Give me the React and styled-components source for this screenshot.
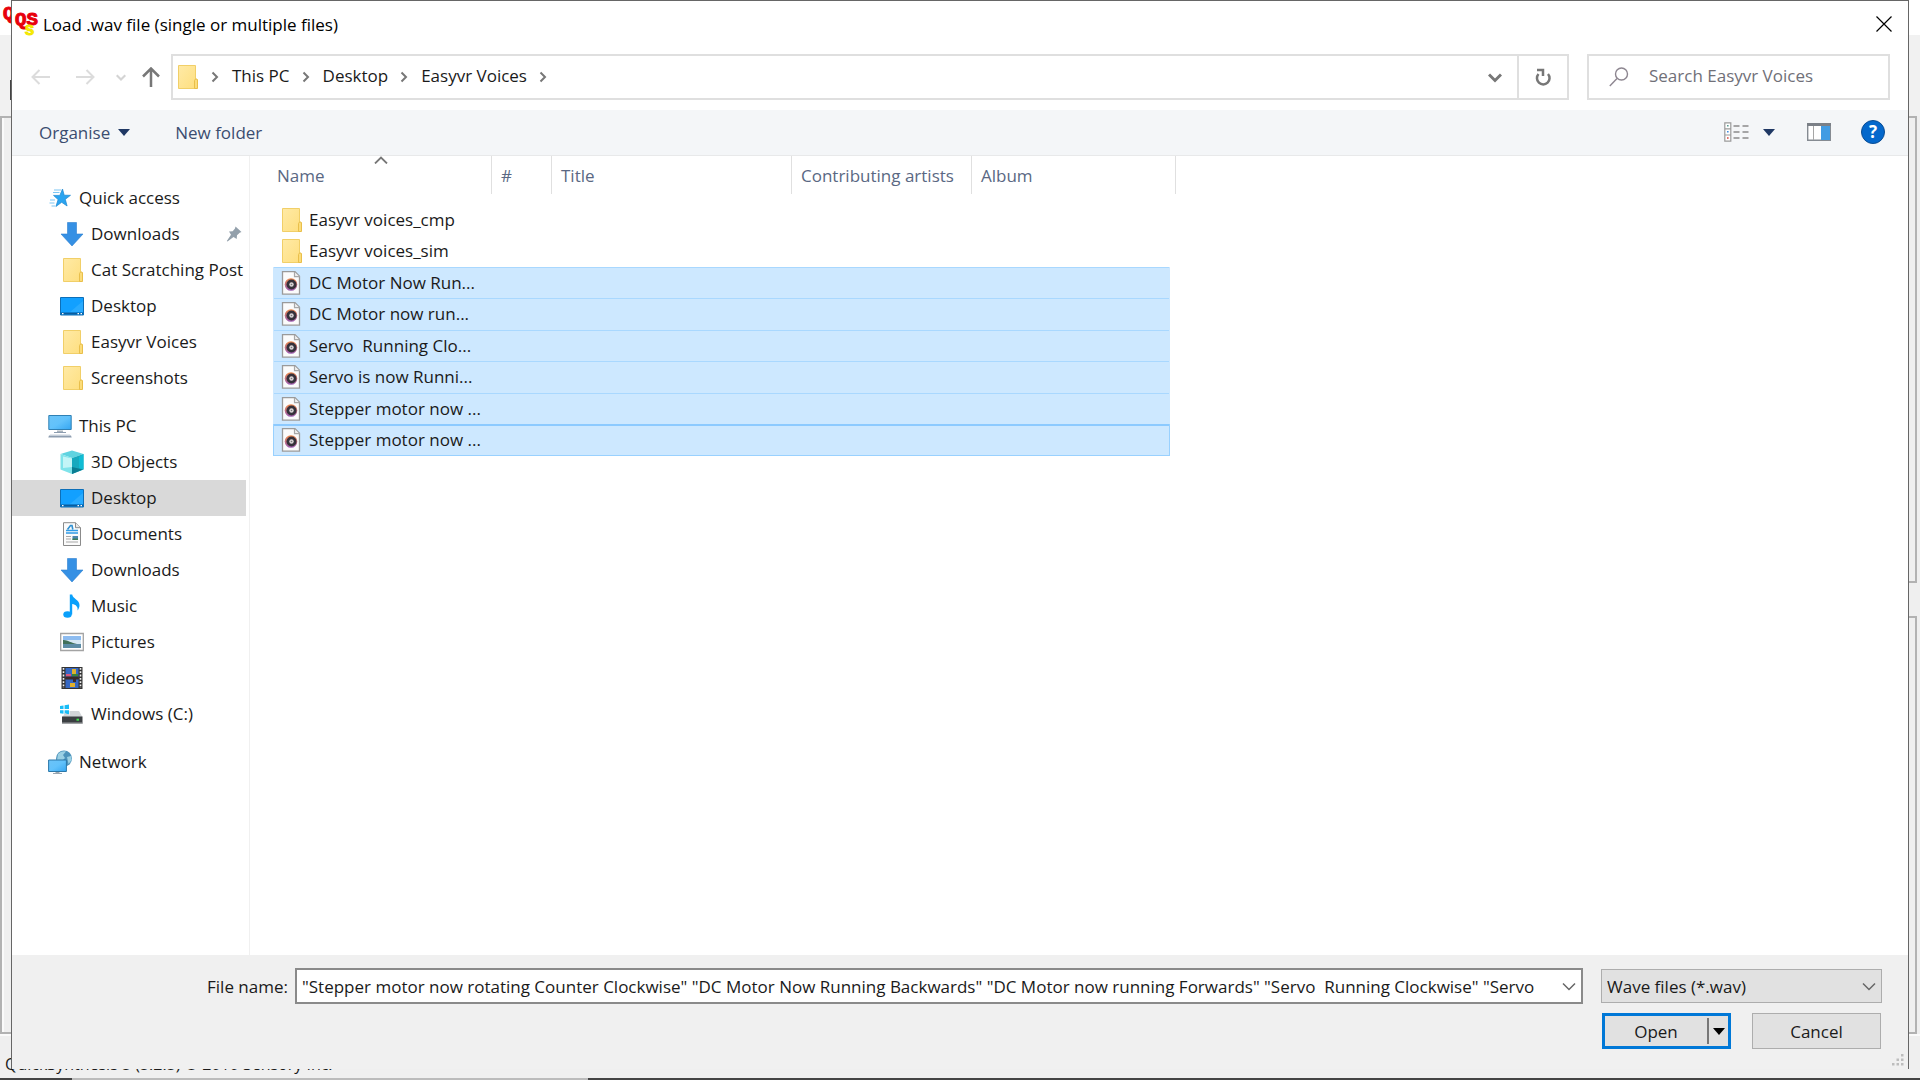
import React from 'react';
import styled, { createGlobalStyle } from 'styled-components';

const quickAccess = [
    { label: 'Downloads', icon: 'download', pinned: true },
    { label: 'Cat Scratching Post', icon: 'folder' },
    { label: 'Desktop', icon: 'desktop' },
    { label: 'Easyvr Voices', icon: 'folder' },
    { label: 'Screenshots', icon: 'folder' },
];

const thisPc = [
    { label: '3D Objects', icon: 'cube' },
    { label: 'Desktop', icon: 'desktop', current: true },
    { label: 'Documents', icon: 'document' },
    { label: 'Downloads', icon: 'download' },
    { label: 'Music', icon: 'music' },
    { label: 'Pictures', icon: 'picture' },
    { label: 'Videos', icon: 'video' },
    { label: 'Windows (C:)', icon: 'drive' },
];

const files = [
    { name: 'Easyvr voices_cmp', icon: 'folder' },
    { name: 'Easyvr voices_sim', icon: 'folder' },
    { name: 'DC Motor Now Run...', icon: 'wave', selected: true },
    { name: 'DC Motor now run...', icon: 'wave', selected: true },
    { name: 'Servo  Running Clo...', icon: 'wave', selected: true },
    { name: 'Servo is now Runni...', icon: 'wave', selected: true },
    { name: 'Stepper motor now ...', icon: 'wave', selected: true },
    { name: 'Stepper motor now ...', icon: 'wave', selected: true, focused: true },
];

const fileNames = '"Stepper motor now rotating Counter Clockwise" "DC Motor Now Running Backwards" "DC Motor now running Forwards" "Servo  Running Clockwise" "Servo';

/* icons, all drawn on a 24px grid */

const shapes = {
    folder: (
        <>
            <path d="M3.5 .5h17v23h-17z" fill="url(#folderFill)" stroke="#f1cf68" />
            <path d="M19.5 23.5v-8l1-1.500h1.500l.5 1v8.500z" fill="#fbdc7a" stroke="#e9bf4b" />
        </>
    ),
    wave: (
        <>
            <path d="M3.500 .7h12.500l4.500 4.500v18h-17z" fill="#fbfbfb" stroke="#9a9a9a" strokeWidth="1.300" />
            <path d="M15.500 1v4.700h5" fill="#eee" stroke="#a8a8a8" strokeWidth="1.200" />
            <circle cx="12" cy="13.500" r="6.300" fill="url(#waveFill)" />
            <circle cx="12.500" cy="13.500" r="5" fill="#35313a" />
            <circle cx="12.500" cy="13.500" r="2.200" fill="#d9d4d6" />
            <circle cx="12.500" cy="13.500" r=".8" fill="#777" />
        </>
    ),
    download: <path d="M7.500 .5h9v11.500h6.500L12 24 1 12h6.500z" fill="#3590e4" stroke="#2b7fd0" strokeWidth=".6" />,
    desktop: (
        <>
            <path d="M.5 3.500h23v17.500H.5z" fill="#12a0ff" stroke="#0d6fb8" />
            <path d="M10 18 23 7v11z" fill="#39b3ff" opacity=".6" />
            <path d="M1 18.500h22v2H1z" fill="#0a5c9d" />
            <path d="M2 19h1.500v1.200H2zM17.500 19H19v1.200h-1.500zM20.500 19H22v1.200h-1.500z" fill="#fff" />
        </>
    ),
    star: (
        <>
            <path d="M14.500 3l1.700 6.200 6.300.1-5.200 4 1.800 6.700-5.400-3.700-5.800 4.200 2.200-6.900-4.600-4.200h6.300z" fill="#2aa4f0" stroke="#1b86d0" strokeWidth=".7" />
            <path d="M6 4h7M5 6.500h6.500M2 14h5M1.500 17h5M3.500 20h3.500" stroke="#7cc6f3" strokeWidth="1.200" />
        </>
    ),
    pc: (
        <>
            <path d="M.8 1.500h22.400v14H.8z" fill="url(#screenFill)" stroke="#2f80b4" />
            <path d="M9 16.500h6v1.500H9z" fill="#aab4bd" />
            <path d="M6 18h12v1H6zM1 21.500h22l.7 2H.3z" fill="#8d9db0" />
            <path d="M2 20.500h20v1H2z" fill="#c7d0da" />
        </>
    ),
    cube: (
        <>
            <path d="M12 .5 23.500 4 12 8 .5 4z" fill="#5fd3e0" />
            <path d="M.5 4 12 8v16L.5 19.500z" fill="#7fe3ea" />
            <path d="M12 8l11.500-4v15.500L12 24z" fill="#16a9be" />
            <path d="M3 6.500l9 2v8.500l-9 1z" fill="#c3f5f7" />
            <path d="M12 17l11 2.500L12 24z" fill="#0a7d92" />
            <path d="M19 7l4.500-3v15.500L19 18z" fill="#10bcd4" />
        </>
    ),
    document: (
        <>
            <path d="M3.500 .7h12l5 5v17.800h-17z" fill="#fbfbfb" stroke="#8b8b8b" />
            <path d="M15.500 .7v5h5" fill="#e8e8e8" stroke="#8b8b8b" />
            <path d="M7.500 7.500 10.500 3.500h1.500l.8 4" fill="none" stroke="#2f8fd0" strokeWidth="1.600" />
            <path d="M6 8.500h12M6 11h12" stroke="#2f9be6" strokeWidth="1.500" />
            <path d="M6 14.500h5M6 17h5M6 20h12" stroke="#a7a7a7" />
            <path d="M12.500 14h5.500v4h-5.500z" fill="#4c86ad" />
            <path d="M12.500 16.500h5.500V18h-5.500z" fill="#3d7d57" />
        </>
    ),
    music: (
        <>
            <ellipse cx="7.500" cy="20.500" rx="4.200" ry="3.200" fill="#0aa0fb" />
            <path d="M9.800 .5h2.400c.5 4.500 7.300 5 7.300 10.500 0 2.300-.8 4.200-2 5.500.7-3.500-1.500-6-5.300-6.500v10.500H9.800z" fill="#0aa0fb" />
        </>
    ),
    picture: (
        <>
            <path d="M.7 3.500h22.600v17H.7z" fill="#fff" stroke="#a3a3a3" strokeWidth="1.300" />
            <path d="M3 6h18v12H3z" fill="#8dbcf0" />
            <path d="M3 10h18v4H3z" fill="#d6e8f4" />
            <path d="M3 10c4-.5 8 3 14 4H3z" fill="#41705a" />
            <path d="M3 14h18v4H3z" fill="#5c8ca5" />
        </>
    ),
    video: (
        <>
            <path d="M1.500 1h21v22h-21z" fill="#333" />
            <path d="M5.500 2h13v9.500h-13zM5.500 13h13v9h-13z" fill="#3668c4" />
            <path d="M12 3h4v5h-4zM10 17h5v4h-5z" fill="#e0b02e" />
            <path d="M6 8h5v2.500H6z" fill="#d8567c" />
            <path d="M12 8h6v2.500h-6z" fill="#37853b" />
            <path d="M5.500 10.500h13v3h-13zM13 13h3v3h-3z" fill="#3a2a2a" />
            <path d="M3.500 2v20M20.500 2v20" stroke="#eee" strokeWidth="1.600" strokeDasharray="1.800 1.500" />
        </>
    ),
    drive: (
        <>
            <path d="M0 4l3.500-.5v3.600H0zM4.600 3.300 9 2.500v4.600H4.600zM0 8.200h3.500v3.500L0 11.200zM4.600 8.200H9v4.400l-4.400-.7z" fill="#19bdf7" />
            <path d="M5 11l-2.500 4h20L19 9H9.500v4z" fill="#d2d5d8" />
            <path d="M2 14.500h20.500v7H2z" fill="#3b3f42" />
            <path d="M2 20.500h20.500v1.500H2z" fill="#a0a3a5" />
            <path d="M16.500 16.700h2.500v2h-2.500z" fill="#3fe04a" />
        </>
    ),
    network: (
        <>
            <circle cx="16" cy="8.500" r="8" fill="#4d93bb" />
            <path d="M10 4c3-3 6-3 8-2.500L15 5l2 3-3 3-5-1zM19 7l4-1 .7 4-3.200 4z" fill="#9ad0e4" />
            <path d="M.6 10h17.800v11.500H.6z" fill="url(#screenFill)" stroke="#2b77a8" />
            <path d="M7.500 22h4v1h-4zM5 23h9v1H5z" fill="#9aa6b0" />
        </>
    ),
};

const Icon = ({ name }) => (
    <IconSvg viewBox="0 0 24 24" aria-hidden="true">{shapes[name]}</IconSvg>
);

const Gradients = () => (
    <HiddenSvg aria-hidden="true">
        <defs>
            <linearGradient id="folderFill" x1="0" y1="0" x2="1" y2="1">
                <stop offset="0" stopColor="#ffeaa6" />
                <stop offset="1" stopColor="#fedf80" />
            </linearGradient>
            <linearGradient id="screenFill" x1="0" y1="0" x2="1" y2="1">
                <stop offset="0" stopColor="#6cc4f8" />
                <stop offset=".5" stopColor="#62c2fb" />
                <stop offset="1" stopColor="#35a6f2" />
            </linearGradient>
            <linearGradient id="waveFill" x1="0" y1="0" x2="0" y2="1">
                <stop offset="0" stopColor="#ee8a4a" />
                <stop offset="1" stopColor="#9a5bb5" />
            </linearGradient>
        </defs>
    </HiddenSvg>
);

const Logo = () => (
    <LogoSvg viewBox="0 0 24 24" aria-hidden="true">
        <text x="0" y="13" fontSize="19" fill="#e8000c" stroke="#e8000c" strokeWidth="1">QS</text>
        <text x="10" y="23" fontSize="15" fill="#fff200" stroke="#efe400" strokeWidth="1">S</text>
    </LogoSvg>
);

const Chevron = ({ size = 14, color = '#777', width = 2 }) => (
    <svg width={size} height={size} viewBox="0 0 14 14" fill="none" stroke={color} strokeWidth={width} aria-hidden="true">
        <path d="M1 4.500l6 6 6-6" />
    </svg>
);

const Crumb = () => (
    <CrumbSvg viewBox="0 0 8 12" fill="none" stroke="#777" strokeWidth="2" aria-hidden="true">
        <path d="M1.500 1.500 6 6l-4.500 4.500" />
    </CrumbSvg>
);

const Caret = ({ color = '#1f3864' }) => (
    <svg width="12" height="7" viewBox="0 0 12 7" aria-hidden="true">
        <path d="M0 0h12L6 7z" fill={color} />
    </svg>
);

const TreeItem = ({ item, root }) => (
    <TreeLink href="#" $root={root} $current={item.current}>
        <Icon name={item.icon} />
        <TreeLabel>{item.label}</TreeLabel>
        {item.pinned && (
            <PinSvg viewBox="0 0 16 16" aria-hidden="true">
                <path d="M9.500 .5 15.500 6l-1.800.8-2.700 2.500-.3 3.700L7.500 11 1.500 15.500.8 15 5 8.700 3 5.500l3.700-.3 2.300-2.700z" fill="#93a0ab" />
            </PinSvg>
        )}
    </TreeLink>
);

const App = () => {
    return (
        <Desktop>
            <GlobalStyle />
            <Gradients />
            <AppWindow>
                <AppTitleBar><Logo /></AppTitleBar>
                <AppToolbar><ToolMark /></AppToolbar>
                <AppPanels>
                    <AppPanel $left />
                    <AppColumn>
                        <AppPanel />
                        <AppPanel />
                    </AppColumn>
                </AppPanels>
                <StatusBar>QuickSynthesis 5 (5.2.5) © 2010 Sensory Inc.</StatusBar>
                <ScrollStrip><ScrollThumb /></ScrollStrip>
            </AppWindow>

            <Dialog role="dialog" aria-labelledby="dialog-title">
                <TitleBar>
                    <Logo />
                    <Title id="dialog-title">Load .wav file (single or multiple files)</Title>
                    <IconButton type="button" aria-label="Close">
                        <svg width="16" height="16" viewBox="0 0 16 16" stroke="#000" strokeWidth="1.200" aria-hidden="true">
                            <path d="M.5 .5l15 15M15.500 .5l-15 15" />
                        </svg>
                    </IconButton>
                </TitleBar>

                <NavBar>
                    <NavButtons>
                        <IconButton type="button" aria-label="Back">
                            <svg width="20" height="16" viewBox="0 0 20 16" fill="none" stroke="#dcdcdc" strokeWidth="2"><path d="M19 8H2M8.500 1 1.500 8l7 7" /></svg>
                        </IconButton>
                        <IconButton type="button" aria-label="Forward">
                            <svg width="20" height="16" viewBox="0 0 20 16" fill="none" stroke="#dcdcdc" strokeWidth="2"><path d="M1 8h17M11.500 1l7 7-7 7" /></svg>
                        </IconButton>
                        <RecentButton type="button" aria-label="Recent locations">
                            <Chevron size={10} color="#d4d4d4" width={3} />
                        </RecentButton>
                        <IconButton type="button" aria-label="Up">
                            <svg width="18" height="20" viewBox="0 0 18 20" fill="none" stroke="#777" strokeWidth="2.500"><path d="M9 20V2M1 9.500l8-8 8 8" /></svg>
                        </IconButton>
                    </NavButtons>
                    <AddressBar>
                        <Icon name="folder" />
                        <Crumb />
                        <CrumbButton type="button">This PC</CrumbButton>
                        <Crumb />
                        <CrumbButton type="button">Desktop</CrumbButton>
                        <Crumb />
                        <CrumbButton type="button">Easyvr Voices</CrumbButton>
                        <Crumb />
                        <AddressDrop type="button" aria-label="Previous locations"><Chevron width={3} /></AddressDrop>
                        <Refresh type="button" aria-label="Refresh">
                            <svg width="16" height="18" viewBox="0 0 16 18" fill="none" stroke="#777" strokeWidth="2.500">
                                <path d="M13 6a6.300 6.300 0 1 1-9.500 0M2 2h6v6" />
                            </svg>
                        </Refresh>
                    </AddressBar>
                    <SearchBox>
                        <svg width="20" height="20" viewBox="0 0 20 20" fill="none" stroke="#8d8690" strokeWidth="1.400" aria-hidden="true">
                            <circle cx="12.500" cy="7" r="6" />
                            <path d="M8 11.500.8 19" />
                        </svg>
                        <input type="text" aria-label="Search Easyvr Voices" placeholder="Search Easyvr Voices" />
                    </SearchBox>
                </NavBar>

                <CommandBar>
                    <Command type="button">Organise <Caret /></Command>
                    <Command type="button">New folder</Command>
                    <ViewTools>
                        <IconButton type="button" aria-label="Change your view">
                            <svg width="25" height="20" viewBox="0 0 25 20" fill="none">
                                <path d="M.8 .8h6v18.400h-6zM.8 6.800h6M.8 13h6" fill="#fff" stroke="#9b9b9b" strokeWidth="1.200" />
                                <path d="M9.500 4h6M18.500 4h6M9.500 10h6M18.500 10h6M9.500 16h6M18.500 16h6" stroke="#8b8b8b" strokeWidth="1.500" />
                                <path d="M3 3h1.600v1.600H3z" fill="#5c9c94" />
                                <path d="M3 9h1.600v1.600H3z" fill="#3f8be0" />
                                <path d="M3 15.200h1.600v1.600H3z" fill="#d9443c" />
                            </svg>
                        </IconButton>
                        <ViewDrop type="button" aria-label="More options"><Caret /></ViewDrop>
                        <IconButton type="button" aria-label="Show the preview pane">
                            <svg width="24" height="18" viewBox="0 0 24 18">
                                <path d="M.7 .7h22.600v16.600H.7z" fill="#fff" stroke="#858b92" strokeWidth="1.400" />
                                <path d="M0 0h24v3H0z" fill="#7b8087" />
                                <path d="M6.500 3v14" stroke="#a6a6a6" />
                                <path d="M14 3h9v14h-9z" fill="#429ce3" />
                            </svg>
                        </IconButton>
                        <HelpButton type="button" aria-label="Help">?</HelpButton>
                    </ViewTools>
                </CommandBar>

                <Body>
                    <Tree aria-label="Folders">
                        <TreeGroup>
                            <TreeItem root item={{ label: 'Quick access', icon: 'star' }} />
                            {quickAccess.map((item) => <TreeItem key={item.label} item={item} />)}
                        </TreeGroup>
                        <TreeGroup>
                            <TreeItem root item={{ label: 'This PC', icon: 'pc' }} />
                            {thisPc.map((item) => <TreeItem key={item.label} item={item} />)}
                        </TreeGroup>
                        <TreeGroup>
                            <TreeItem root item={{ label: 'Network', icon: 'network' }} />
                        </TreeGroup>
                    </Tree>
                    <FilePane>
                        <FileTable>
                            <colgroup>
                                <Col $width={219} />
                                <Col $width={60} />
                                <Col $width={240} />
                                <Col $width={180} />
                                <Col $width={198} />
                                <Col $width={6} />
                            </colgroup>
                            <thead>
                                <tr>
                                    <HeadCell>
                                        <HeadLabel $first>
                                            Name
                                            <SortMark viewBox="0 0 14 8" fill="none" stroke="#777" strokeWidth="1.800" aria-hidden="true"><path d="M1 7.500l6-6 6 6" /></SortMark>
                                        </HeadLabel>
                                    </HeadCell>
                                    <HeadCell><HeadLabel>#</HeadLabel></HeadCell>
                                    <HeadCell><HeadLabel>Title</HeadLabel></HeadCell>
                                    <HeadCell><HeadLabel>Contributing artists</HeadLabel></HeadCell>
                                    <HeadCell colSpan={2}><HeadLabel>Album</HeadLabel></HeadCell>
                                </tr>
                            </thead>
                            <tbody>
                                {files.map((file, i) => (
                                    <FileRow key={i} $selected={file.selected} $focused={file.focused}>
                                        <td><FileName><Icon name={file.icon} />{file.name}</FileName></td>
                                        <td />
                                        <td />
                                        <td />
                                        <td />
                                    </FileRow>
                                ))}
                            </tbody>
                        </FileTable>
                    </FilePane>
                </Body>

                <Footer>
                    <FooterRow>
                        <FileLabel htmlFor="file-name">File name:</FileLabel>
                        <Combo>
                            <input id="file-name" type="text" defaultValue={fileNames} />
                            <IconButton type="button" aria-label="Recent file names"><Chevron color="#666" width={1.5} /></IconButton>
                        </Combo>
                        <TypeSelect>
                            <select aria-label="File type" defaultValue="wav">
                                <option value="wav">Wave files (*.wav)</option>
                            </select>
                            <Chevron color="#666" width={1.5} />
                        </TypeSelect>
                    </FooterRow>
                    <FooterButtons>
                        <SplitButton>
                            <button type="button">Open</button>
                            <SplitArrow type="button" aria-label="Open options"><Caret color="#000" /></SplitArrow>
                        </SplitButton>
                        <CancelButton type="button">Cancel</CancelButton>
                    </FooterButtons>
                    <Grip viewBox="0 0 12 12" aria-hidden="true">
                        <path d="M9 0h2.500v2.500H9zM4.500 4.500H7V7H4.500zM9 4.500h2.500V7H9zM0 9h2.500v2.500H0zM4.500 9H7v2.500H4.500zM9 9h2.500v2.500H9z" fill="#bdbdbd" />
                    </Grip>
                </Footer>
            </Dialog>
        </Desktop>
    )
}

export default App;


const GlobalStyle = createGlobalStyle`
    * {
        box-sizing: border-box;
    }

    body {
        margin: 0;
        color: #1a1a1a;
        background: #efefef;
    }

    body, button, input, select {
        font-family: "Open Sans", "Noto Sans", sans-serif;
        font-size: 17px;
    }

    button, input, select {
        margin: 0;
        padding: 0;
        border: none;
        border-radius: 0;
        background: transparent;
        color: inherit;
        outline-width: 0;
    }

    button {
        cursor: pointer;
    }

    svg {
        display: block;
        flex-shrink: 0;
    }
`;

const HiddenSvg = styled.svg`
    position: absolute;
    width: 0;
    height: 0;
`;

const IconSvg = styled.svg`
    width: 24px;
    height: 24px;
`;

const LogoSvg = styled.svg`
    width: 24px;
    height: 24px;
    overflow: visible;

    text {
        font-family: "Liberation Mono", monospace;
        font-weight: 700;
    }
`;

const CrumbSvg = styled.svg`
    width: 8px;
    height: 12px;
`;

const PinSvg = styled.svg`
    width: 16px;
    height: 16px;
    margin-right: 4px;
`;

const Desktop = styled.div`
    position: relative;
    min-height: 100vh;
    display: flex;
    overflow: hidden;
`;

/* the program behind the dialog */

const AppWindow = styled.div`
    flex: 1;
    display: flex;
    flex-direction: column;
`;

const AppTitleBar = styled.div`
    height: 35px;
    padding: 6px 3px;
    background: #fff;
`;

const AppToolbar = styled.div`
    height: 81px;
    display: flex;
    align-items: center;
    padding: 28px 0 0 10px;
    background: #f1f1f1;
`;

const ToolMark = styled.span`
    width: 4px;
    height: 20px;
    background: #444;
`;

const AppPanels = styled.div`
    flex: 1;
    display: flex;
    padding-right: 3px;
`;

const AppColumn = styled.div`
    width: 40%;
    display: grid;
    grid-template-rows: 467fr 418fr;
    gap: 33px;
`;

const AppPanel = styled.div`
    flex: 1;
    border: 2px solid #b2b2b2;
    border-left-width: ${({ $left }) => ($left ? '2px' : '0')};
    border-right-width: ${({ $left }) => ($left ? '0' : '2px')};
    box-shadow: inset 2px 0 0 #fafafa;
    background: #efefef;
`;

const StatusBar = styled.div`
    height: 44px;
    padding: 16px 5px 0;
    font-size: 16px;
    line-height: 24px;
    border-top: 2px solid #fafafa;
`;

const ScrollStrip = styled.div`
    display: flex;
    height: 2px;
    padding-left: 72px;
    background: #444;
`;

const ScrollThumb = styled.div`
    width: 516px;
    background: #bbb;
`;

/* the file dialog */

const Dialog = styled.div`
    position: absolute;
    inset: 0 11px 11px 11px;
    display: flex;
    flex-direction: column;
    border: 1px solid #666;
    border-bottom: none;
    background: #fff;
`;

const TitleBar = styled.div`
    display: flex;
    align-items: center;
    height: 46px;
    padding: 0 16px 0 3px;
`;

const Title = styled.div`
    flex: 1;
    margin-left: 4px;
    color: #000;
`;

const IconButton = styled.button`
    display: flex;
    align-items: center;
    justify-content: center;
`;

const NavBar = styled.div`
    display: flex;
    align-items: center;
    height: 63px;
    padding: 0 18px 4px 19px;
`;

const NavButtons = styled.div`
    display: flex;
    align-items: center;
    width: 140px;
    gap: 24px;
`;

const RecentButton = styled(IconButton)`
    margin: 0 -8px 0 -3px;
`;

const AddressBar = styled.div`
    flex: 1;
    display: flex;
    align-items: center;
    height: 46px;
    padding-left: 2px;
    border: 2px solid #dfdfdf;

    > ${CrumbSvg} {
        margin: 0 13px 0 12px;
    }
`;

const CrumbButton = styled.button`
    padding-bottom: 2px;
    white-space: nowrap;
`;

const AddressDrop = styled(IconButton)`
    width: 62px;
    height: 100%;
    margin-left: auto;
    padding-right: 15px;
    justify-content: flex-end;
`;

const Refresh = styled(IconButton)`
    width: 50px;
    height: 100%;
    border-left: 2px solid #dfdfdf;
`;

const SearchBox = styled.div`
    display: flex;
    align-items: center;
    width: 303px;
    height: 46px;
    margin-left: 18px;
    padding: 0 20px;
    gap: 20px;
    border: 2px solid #dfdfdf;

    > input {
        flex: 1;
        min-width: 0;
        padding-bottom: 2px;
    }

    > input::placeholder {
        color: #707078;
        opacity: 1;
    }
`;

const CommandBar = styled.div`
    display: flex;
    align-items: center;
    height: 46px;
    padding: 0 23px 1px 27px;
    gap: 45px;
    border-bottom: 1px solid #e8e9ea;
    background: #f4f6f8;
`;

const Command = styled.button`
    display: flex;
    align-items: center;
    gap: 8px;
    color: #3b4d70;
`;

const ViewTools = styled.div`
    display: flex;
    align-items: center;
    margin-left: auto;
`;

const ViewDrop = styled(IconButton)`
    margin: 0 32px 0 14px;
`;

const HelpButton = styled.button`
    width: 24px;
    height: 24px;
    margin-left: 30px;
    border: 1px solid #0a4d94;
    border-radius: 50%;
    background: #0468cc;
    color: #fff;
    font-weight: 700;
    line-height: 20px;
`;

const Body = styled.div`
    flex: 1;
    display: flex;
    min-height: 0;
`;

const Tree = styled.nav`
    display: flex;
    flex-direction: column;
    width: 238px;
    padding: 24px 3px 0 0;
    gap: 12px;
    border-right: 1px solid #f0f0f0;
`;

const TreeGroup = styled.div`
    display: flex;
    flex-direction: column;
`;

const TreeLink = styled.a`
    display: flex;
    align-items: center;
    height: 36px;
    padding-left: ${({ $root }) => ($root ? '36px' : '48px')};
    gap: 7px;
    background: ${({ $current }) => ($current ? '#d9d9d9' : 'transparent')};
    color: inherit;
    text-decoration: none;
`;

const TreeLabel = styled.span`
    flex: 1;
    padding-bottom: 2px;
    white-space: nowrap;
`;

const FilePane = styled.div`
    flex: 1;
    padding-left: 23px;
`;

const FileTable = styled.table`
    width: 903px;
    table-layout: fixed;
    border-spacing: 0;
`;

const Col = styled.col`
    width: ${({ $width }) => $width}px;
`;

const HeadCell = styled.th`
    height: 48px;
    padding: 0;
    vertical-align: top;
    font-weight: 400;
    text-align: left;
`;

const HeadLabel = styled.div`
    position: relative;
    display: flex;
    align-items: center;
    height: 38px;
    padding-left: ${({ $first }) => ($first ? '4px' : '9px')};
    border-right: 1px solid #e0e0e0;
    color: #5a6883;
`;

const SortMark = styled.svg`
    position: absolute;
    top: 0;
    left: calc(50% - 8px);
    width: 14px;
    height: 8px;
`;

const FileRow = styled.tr`
    > td {
        height: 31px;
        padding: 0;
        background: ${({ $selected }) => ($selected ? '#cde8ff' : 'transparent')};
        box-shadow: ${({ $selected, $focused }) => ($focused ? 'inset 0 2px #8ccaff, inset 0 -1px #99d1ff' : $selected ? 'inset 0 1px #a9d8ff' : 'none')};
    }

    > td:first-child {
        border-left: ${({ $focused }) => ($focused ? '1px solid #99d1ff' : '1px solid transparent')};
    }

    > td:last-child {
        border-right: ${({ $focused }) => ($focused ? '1px solid #99d1ff' : '1px solid transparent')};
    }

    &:nth-child(even) > td {
        height: 32px;
    }
`;

const FileName = styled.div`
    display: flex;
    align-items: center;
    padding-left: 5px;
    gap: 6px;
    line-height: 24px;
    white-space: pre;
`;

const Footer = styled.div`
    position: relative;
    height: 114px;
    padding: 13px 26px 0 0;
    background: #f0f0f0;
`;

const FooterRow = styled.div`
    display: flex;
    align-items: center;
    height: 36px;
`;

const FileLabel = styled.label`
    width: 283px;
    padding-right: 7px;
    text-align: right;
`;

const Combo = styled.div`
    flex: 1;
    display: flex;
    height: 36px;
    border: 2px solid #8a8a8a;
    background: #fff;

    > input {
        flex: 1;
        min-width: 0;
        padding-left: 5px;
    }

    > button {
        width: 24px;
    }
`;

const TypeSelect = styled.div`
    display: flex;
    align-items: center;
    width: 281px;
    height: 34px;
    margin-left: 18px;
    padding-right: 5px;
    border: 1px solid #adadad;
    background: #e1e1e1;

    > select {
        flex: 1;
        height: 100%;
        padding-left: 5px;
        appearance: none;
    }
`;

const FooterButtons = styled.div`
    display: flex;
    justify-content: flex-end;
    margin-top: 9px;
    padding-right: 1px;
    gap: 21px;
`;

const SplitButton = styled.div`
    display: flex;
    align-items: center;
    width: 129px;
    height: 36px;
    border: 3px solid #0078d7;
    background: #e1e1e1;

    > :first-child {
        flex: 1;
    }
`;

const SplitArrow = styled(IconButton)`
    width: 21px;
    height: 26px;
    border-left: 2px solid #777;
`;

const CancelButton = styled.button`
    width: 129px;
    height: 36px;
    border: 1px solid #adadad;
    background: #e1e1e1;
`;

const Grip = styled.svg`
    position: absolute;
    right: 4px;
    bottom: 3px;
    width: 12px;
    height: 12px;
`;
